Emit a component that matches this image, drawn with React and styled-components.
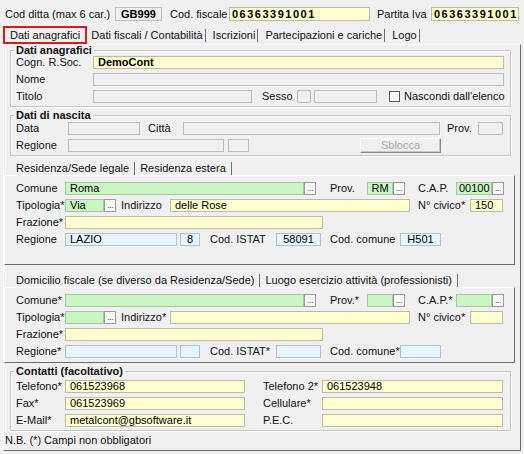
import React from "react";
import styled, { createGlobalStyle, css } from "styled-components";

const GlobalStyle = createGlobalStyle`
  html, body { margin: 0; padding: 0; background: #f0f0f0; }
  body { font-family: "Liberation Sans", Arial, sans-serif; font-size: 11px; color: #111; }
  *, *::before, *::after { box-sizing: border-box; }
`;

const tones = {
  gray: { bg: "#f0f0f0", border: "#bdbdbd" },
  yellow: { bg: "#ffffd2", border: "#bdbba4" },
  green: { bg: "#c9f6c3", border: "#a9c4a6" },
  blue: { bg: "#e5f6fd", border: "#aec3cc" },
};

const Window = styled.div`
  width: 524px;
  height: 454px;
  overflow: hidden;
  background: #f0f0f0;
  display: flex;
  flex-direction: column;
`;

const HeaderBar = styled.div`
  display: flex;
  align-items: center;
  height: 14px;
  margin-top: 7px;
  padding-left: 5px;
`;

const TabStrip = styled.div`
  display: flex;
  align-items: center;
  height: 18px;
  margin: 5px 0 0 3px;
`;

const Tab = styled.div`
  display: flex;
  align-items: center;
  height: 18px;
  white-space: nowrap;
  ${(p) =>
    p.$active
      ? css`
          border: 2px solid #e3161d;
          padding: 0 5px;
        `
      : css`
          padding-left: ${p.$pl ?? 7}px;
          &::after {
            content: "";
            width: 1px;
            height: 13px;
            margin-left: 2px;
            background: #6f6f6f;
          }
        `}
`;

const MainPanel = styled.div`
  flex: 0 0 auto;
  margin-left: 3px;
  width: 518px;
  height: 407px;
  border: 1px solid;
  border-color: #fff #6b6b6b #6b6b6b #fff;
  display: flex;
  flex-direction: column;
`;

const Group = styled.section`
  margin: ${(p) => p.$mt}px 0 0 6px;
  width: 501px;
  border: 1px solid #c6c6c6;
  box-shadow: inset 1px 1px 0 #fff, 1px 1px 0 #fff;
  padding: 0 0 ${(p) => p.$pb ?? 3}px 5px;
`;

const GroupTitle = styled.div`
  width: max-content;
  margin: -7px 0 ${(p) => p.$gap ?? 0}px -2px;
  padding: 0 2px;
  background: #f0f0f0;
  font-weight: 700;
  line-height: 13px;
`;

const Rows = styled.div`
  display: flex;
  flex-direction: column;
  gap: 4px;
`;

const Row = styled.div`
  display: flex;
  align-items: center;
  height: ${(p) => p.$h ?? 13}px;
  margin-top: ${(p) => p.$mt ?? 0}px;
`;

const SubTabStrip = styled.div`
  display: flex;
  align-items: center;
  height: 14px;
  margin-top: ${(p) => p.$mt}px;
  padding-left: 12px;
`;

const SubTab = styled.div`
  display: flex;
  align-items: center;
  white-space: nowrap;
  padding-left: ${(p) => (p.$first ? 0 : 5)}px;
  &::after {
    content: "";
    width: 1px;
    height: 13px;
    margin-left: 5px;
    background: #6f6f6f;
  }
`;

const SubPanel = styled.div`
  width: 511px;
  border: 1px solid;
  border-color: #fff #6b6b6b #6b6b6b #fff;
  padding: 6px 0 ${(p) => p.$pb}px 11px;
`;

const Label = styled.span`
  flex: 0 0 ${(p) => (p.$w ? `${p.$w}px` : "auto")};
  margin-left: ${(p) => p.$ml ?? 0}px;
  white-space: nowrap;
  line-height: 13px;
`;

const Field = styled.div`
  flex: 0 0 ${(p) => p.$w}px;
  height: ${(p) => p.$h ?? 13}px;
  margin-left: ${(p) => p.$ml ?? 0}px;
  background: ${(p) => tones[p.$tone ?? "gray"].bg};
  border: 1px solid ${(p) => tones[p.$tone ?? "gray"].border};
  padding: 0 ${(p) => p.$pad ?? 4}px;
  line-height: ${(p) => (p.$h ?? 13) - 2}px;
  font-weight: ${(p) => (p.$bold ? 700 : 400)};
  letter-spacing: ${(p) => p.$ls ?? 0}px;
  text-align: ${(p) => (p.$center ? "center" : "left")};
  white-space: nowrap;
  overflow: hidden;
  color: #000;
`;

const Dots = styled.div`
  flex: 0 0 12px;
  height: 13px;
  border: 1px solid #9a9a9a;
  background: #f8f8f8;
  display: flex;
  align-items: flex-end;
  justify-content: center;
  padding-bottom: 2px;
  font-size: 9px;
  line-height: 7px;
  letter-spacing: -0.5px;
  color: #3a5478;
`;

const Check = styled.span`
  flex: 0 0 11px;
  height: 11px;
  margin-left: ${(p) => p.$ml ?? 0}px;
  border: 1px solid #5a5a5a;
  background: #fafafa;
`;

const Button = styled.div`
  flex: 0 0 ${(p) => p.$w}px;
  height: 15px;
  margin-left: ${(p) => p.$ml ?? 0}px;
  border: 1px solid;
  border-color: #fff #8a8a8a #8a8a8a #fff;
  box-shadow: inset -1px -1px 0 #c8c8c8;
  background: #f0f0f0;
  color: #a6a6a6;
  text-align: center;
  line-height: 13px;
`;

const Note = styled.div`
  margin: 3px 0 0 1px;
  line-height: 13px;
`;

function AddressRows({ values, star }) {
  const s = star ? "*" : "";
  const v = values || {};
  return (
    <Rows>
      <Row>
        <Label $w={49}>{`Comune${s}`}</Label>
        <Field $w={239} $tone="green">{v.comune}</Field>
        <Dots>...</Dots>
        <Label $ml={14} $w={37}>{`Prov.${s}`}</Label>
        <Field $w={26} $tone="green" $center $pad={1}>{v.prov}</Field>
        <Dots>...</Dots>
        <Label $ml={13} $w={38}>{`C.A.P.${s}`}</Label>
        <Field $w={36} $tone="green" $pad={2}>{v.cap}</Field>
        <Dots>...</Dots>
      </Row>
      <Row>
        <Label $w={49}>Tipologia*</Label>
        <Field $w={39} $tone="green">{v.tipo}</Field>
        <Dots>...</Dots>
        <Label $ml={5} $w={49}>{`Indirizzo${s}`}</Label>
        <Field $w={240} $tone="yellow">{v.indirizzo}</Field>
        <Label $ml={8} $w={52}>N° civico*</Label>
        <Field $w={33} $tone="yellow">{v.civico}</Field>
      </Row>
      <Row>
        <Label $w={49}>Frazione*</Label>
        <Field $w={258} $tone="yellow" />
      </Row>
      <Row>
        <Label $w={49}>{`Regione${s}`}</Label>
        <Field $w={112} $tone="blue">{v.regione}</Field>
        <Field $ml={3} $w={20} $tone="blue" $center $pad={1}>{v.codReg}</Field>
        <Label $ml={10} $w={66}>{`Cod. ISTAT${s}`}</Label>
        <Field $w={45} $tone="blue" $center $pad={1}>{v.istat}</Field>
        <Label $ml={9} $w={70}>{`Cod. comune${s}`}</Label>
        <Field $w={41} $tone="blue" $center $pad={1}>{v.codCom}</Field>
      </Row>
    </Rows>
  );
}

export default function App() {
  return (
    <>
      <GlobalStyle />
      <Window>
        <HeaderBar>
          <Label $w={110}>Cod ditta (max 6 car.)</Label>
          <Field $w={47} $h={14} $bold $center $pad={1}>GB999</Field>
          <Label $ml={8} $w={59}>Cod. fiscale</Label>
          <Field $w={141} $h={14} $tone="yellow" $bold $ls={1.5} $pad={2}>06363391001</Field>
          <Label $ml={7} $w={54}>Partita Iva</Label>
          <Field $w={88} $h={14} $tone="yellow" $bold $ls={1.5} $pad={2}>06363391001</Field>
        </HeaderBar>

        <TabStrip>
          <Tab $active>Dati anagrafici</Tab>
          <Tab $pl={4}>Dati fiscali / Contabilità</Tab>
          <Tab>Iscrizioni</Tab>
          <Tab>Partecipazioni e cariche</Tab>
          <Tab>Logo</Tab>
        </TabStrip>

        <MainPanel>
          <Group $mt={5}>
            <GroupTitle $gap={-1}>Dati anagrafici</GroupTitle>
            <Rows>
              <Row>
                <Label $w={77}>Cogn. R.Soc.</Label>
                <Field $w={411} $tone="yellow" $bold>DemoCont</Field>
              </Row>
              <Row>
                <Label $w={77}>Nome</Label>
                <Field $w={411} />
              </Row>
              <Row>
                <Label $w={77}>Titolo</Label>
                <Field $w={159} />
                <Label $ml={10} $w={35}>Sesso</Label>
                <Field $w={14} />
                <Field $ml={3} $w={63} />
                <Check $ml={12} />
                <Label $ml={4}>Nascondi dall'elenco</Label>
              </Row>
            </Rows>
          </Group>

          <Group $mt={8} $pb={2}>
            <GroupTitle>Dati di nascita</GroupTitle>
            <Row>
              <Label $w={52}>Data</Label>
              <Field $w={72} />
              <Label $ml={8} $w={35}>Città</Label>
              <Field $w={257} />
              <Label $ml={7} $w={31}>Prov.</Label>
              <Field $w={25} />
            </Row>
            <Row $h={15} $mt={3}>
              <Label $w={52}>Regione</Label>
              <Field $w={156} />
              <Field $ml={4} $w={21} />
              <Button $ml={111} $w={81}>Sblocca</Button>
            </Row>
          </Group>

          <SubTabStrip $mt={5}>
            <SubTab $first>Residenza/Sede legale</SubTab>
            <SubTab>Residenza estera</SubTab>
          </SubTabStrip>
          <SubPanel $pb={18}>
            <AddressRows
              values={{
                comune: "Roma",
                prov: "RM",
                cap: "00100",
                tipo: "Via",
                indirizzo: "delle Rose",
                civico: "150",
                regione: "LAZIO",
                codReg: "8",
                istat: "58091",
                codCom: "H501",
              }}
            />
          </SubPanel>

          <SubTabStrip $mt={8}>
            <SubTab $first>Domicilio fiscale (se diverso da Residenza/Sede)</SubTab>
            <SubTab>Luogo esercizio attività (professionisti)</SubTab>
          </SubTabStrip>
          <SubPanel $pb={4}>
            <AddressRows star />
          </SubPanel>

          <Group $mt={8}>
            <GroupTitle $gap={2}>Contatti (facoltativo)</GroupTitle>
            <Rows>
              <Row>
                <Label $w={49}>Telefono*</Label>
                <Field $w={180} $tone="yellow">061523968</Field>
                <Label $ml={18} $w={59}>Telefono 2*</Label>
                <Field $w={181} $tone="yellow">061523948</Field>
              </Row>
              <Row>
                <Label $w={49}>Fax*</Label>
                <Field $w={180} $tone="yellow">061523969</Field>
                <Label $ml={18} $w={59}>Cellulare*</Label>
                <Field $w={181} $tone="yellow" />
              </Row>
              <Row>
                <Label $w={49}>E-Mail*</Label>
                <Field $w={180} $tone="yellow">metalcont@gbsoftware.it</Field>
                <Label $ml={18} $w={59}>P.E.C.</Label>
                <Field $w={181} $tone="yellow" />
              </Row>
            </Rows>
          </Group>

          <Note>N.B. (*) Campi non obbligatori</Note>
        </MainPanel>
      </Window>
    </>
  );
}
